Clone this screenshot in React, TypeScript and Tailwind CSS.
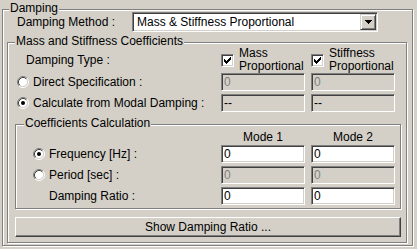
import type { ReactNode } from "react";

const sunken =
  "border border-t-[#808080] border-l-[#808080] border-r-white border-b-white shadow-[inset_1px_1px_0_#404040,inset_-1px_-1px_0_#d4d0c8]";

function GroupBox({
  label,
  labelClass,
  className,
  children,
}: {
  label: string;
  labelClass: string;
  className: string;
  children: ReactNode;
}) {
  return (
    <div
      className={[
        "relative border border-[#808080] shadow-[inset_1px_1px_0_#fff,1px_1px_0_#fff]",
        className,
      ].join(" ")}
    >
      <span
        className={[
          "absolute top-[-9px] bg-[#d4d0c8] px-[1px] leading-[14px] whitespace-nowrap",
          labelClass,
        ].join(" ")}
      >
        {label}
      </span>
      {children}
    </div>
  );
}

function Field({ value, mode }: { value: string; mode: "edit" | "disabled" | "readonly" }) {
  return (
    <div
      className={[
        "h-[18px] w-[84px] flex items-center pl-[2px]",
        sunken,
        mode === "edit" ? "bg-white" : "bg-[#d4d0c8]",
        mode === "disabled" ? "text-[#808080]" : "text-black",
      ].join(" ")}
    >
      {value}
    </div>
  );
}

function Check() {
  return (
    <span className={["w-[13px] h-[13px] shrink-0 bg-white flex items-center justify-center", sunken].join(" ")}>
      <svg width="7" height="7" viewBox="0 0 7 7" shapeRendering="crispEdges">
        <path
          fill="#000"
          d="M6 0h1v1h-1z M5 1h2v1h-2z M0 2h1v1h-1z M4 2h3v1h-3z M0 3h2v1h-2z M3 3h3v1h-3z M0 4h5v1h-5z M1 5h3v1h-3z M2 6h1v1h-1z"
        />
      </svg>
    </span>
  );
}

function Radio({ on }: { on?: boolean }) {
  return (
    <svg width="12" height="12" viewBox="0 0 12 12" className="shrink-0">
      <circle cx="6" cy="6" r="4.5" fill="#fff" />
      <path d="M2.11 9.89 A5.5 5.5 0 0 1 9.89 2.11" fill="none" stroke="#808080" />
      <path d="M9.89 2.11 A5.5 5.5 0 0 1 2.11 9.89" fill="none" stroke="#fff" />
      <path d="M2.82 9.18 A4.5 4.5 0 0 1 9.18 2.82" fill="none" stroke="#404040" />
      <path d="M9.18 2.82 A4.5 4.5 0 0 1 2.82 9.18" fill="none" stroke="#d4d0c8" />
      {on && <circle cx="6" cy="6" r="2" fill="#000" />}
    </svg>
  );
}

function Combo() {
  return (
    <div className={["w-[246px] h-[20px] bg-white flex items-center p-[1px]", sunken].join(" ")}>
      <span className="pl-[3px] flex-1 whitespace-nowrap">Mass &amp; Stiffness Proportional</span>
      <span className="w-[16px] h-[16px] flex items-center justify-center bg-[#d4d0c8] border border-t-[#d4d0c8] border-l-[#d4d0c8] border-r-[#404040] border-b-[#404040] shadow-[inset_1px_1px_0_#fff,inset_-1px_-1px_0_#808080]">
        <svg width="7" height="4" viewBox="0 0 7 4" shapeRendering="crispEdges">
          <path fill="#000" d="M0 0h7v1h-7z M1 1h5v1h-5z M2 2h3v1h-3z M3 3h1v1h-1z" />
        </svg>
      </span>
    </div>
  );
}

export default function App() {
  return (
    <div className="w-[417px] h-[249px] bg-[#d4d0c8] pt-[9px] pl-[2px] text-[12px] leading-[14px] text-black font-['Liberation_Sans',Arial,sans-serif] overflow-hidden">
      <GroupBox label="Damping" labelClass="left-[6px]" className="w-[411px] h-[237px] pt-[2px]">
        <div className="flex items-center h-[20px] pl-[14px]">
          <span className="w-[115px] whitespace-nowrap">Damping Method :</span>
          <Combo />
        </div>

        <GroupBox
          label="Mass and Stiffness Coefficients"
          labelClass="left-[7px]"
          className="ml-[4px] mt-[10px] w-[400px] h-[201px] pt-[4px]"
        >
          <div className="grid grid-cols-[207px_84px_84px] gap-x-[6px] h-[24px] items-center">
            <span className="pl-[18px]">Damping Type :</span>
            <div className="flex items-center gap-[5px]">
              <Check />
              <span className="leading-[13px] flex flex-col">
                <span>Mass</span>
                <span>Proportional</span>
              </span>
            </div>
            <div className="flex items-center gap-[5px]">
              <Check />
              <span className="leading-[13px] whitespace-nowrap flex flex-col">
                <span>Stiffness</span>
                <span>Proportional</span>
              </span>
            </div>
          </div>

          <div className="grid grid-cols-[207px_84px_84px] gap-x-[6px] h-[18px] mt-[2px] items-center">
            <div className="flex items-center gap-[4px] pl-[9px]">
              <Radio />
              <span>Direct Specification :</span>
            </div>
            <Field value="0" mode="disabled" />
            <Field value="0" mode="disabled" />
          </div>

          <div className="grid grid-cols-[207px_84px_84px] gap-x-[6px] h-[18px] mt-[3px] items-center">
            <div className="flex items-center gap-[4px] pl-[9px] whitespace-nowrap">
              <Radio on />
              <span>Calculate from Modal Damping :</span>
            </div>
            <Field value="--" mode="readonly" />
            <Field value="--" mode="readonly" />
          </div>

          <GroupBox
            label="Coefficients Calculation"
            labelClass="left-[8px]"
            className="ml-[7px] mt-[12px] w-[386px] h-[85px] pt-[5px]"
          >
            <div className="grid grid-cols-[199px_84px_84px] gap-x-[6px] h-[14px] items-center">
              <span />
              <span className="text-center">Mode 1</span>
              <span className="text-center">Mode 2</span>
            </div>
            <div className="grid grid-cols-[199px_84px_84px] gap-x-[6px] h-[18px] mt-[1px] items-center">
              <div className="flex items-center gap-[4px] pl-[17px]">
                <Radio on />
                <span>Frequency [Hz] :</span>
              </div>
              <Field value="0" mode="edit" />
              <Field value="0" mode="edit" />
            </div>
            <div className="grid grid-cols-[199px_84px_84px] gap-x-[6px] h-[18px] mt-[3px] items-center">
              <div className="flex items-center gap-[4px] pl-[17px]">
                <Radio />
                <span>Period [sec] :</span>
              </div>
              <Field value="0" mode="disabled" />
              <Field value="0" mode="disabled" />
            </div>
            <div className="grid grid-cols-[199px_84px_84px] gap-x-[6px] h-[18px] mt-[3px] items-center">
              <span className="pl-[33px]">Damping Ratio :</span>
              <Field value="0" mode="edit" />
              <Field value="0" mode="edit" />
            </div>
          </GroupBox>

          <button className="ml-[7px] mt-[8px] w-[386px] h-[20px] flex items-center justify-center bg-[#d4d0c8] border border-t-white border-l-white border-r-[#404040] border-b-[#404040] shadow-[inset_-1px_-1px_0_#808080]">
            Show Damping Ratio ...
          </button>
        </GroupBox>
      </GroupBox>
    </div>
  );
}
